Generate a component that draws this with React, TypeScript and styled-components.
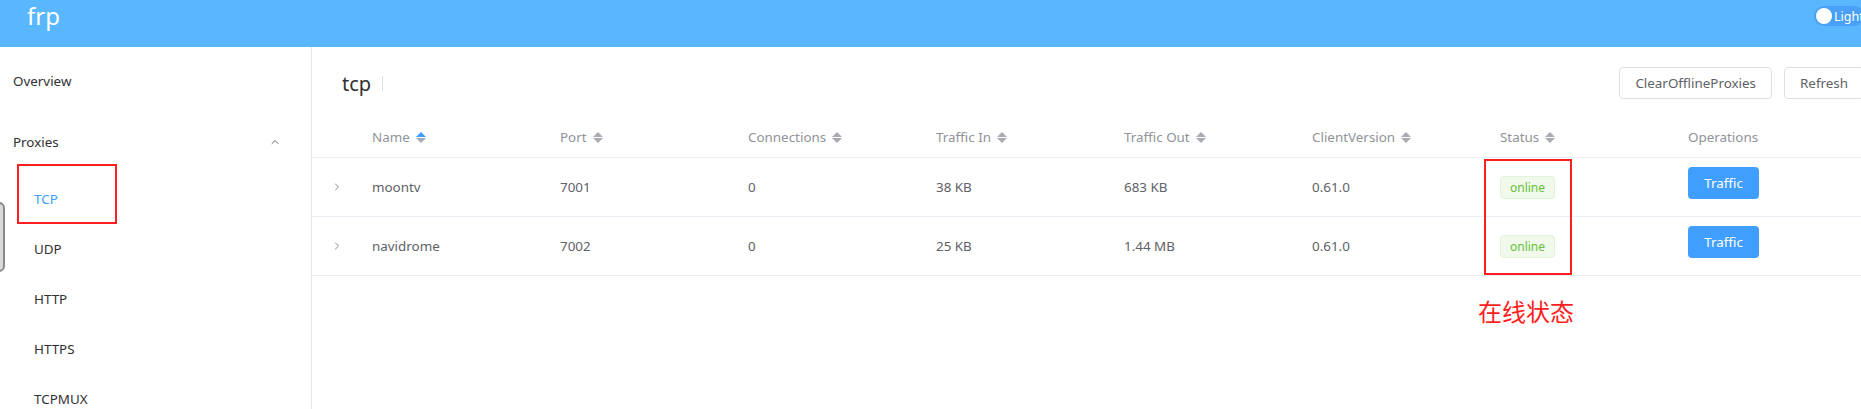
import React from "react";
import styled, { createGlobalStyle } from "styled-components";
import { ChevronRight, ChevronUp } from "lucide-react";

const GlobalStyle = createGlobalStyle`
  html, body {
    margin: 0;
    padding: 0;
    overflow: hidden;
    background: #fff;
  }
  body {
    font-family: "Noto Sans", "Noto Sans CJK SC", sans-serif;
    color: #303133;
  }
  * {
    box-sizing: border-box;
  }
`;

const Page = styled.div`
  width: 1884px;
  height: 409px;
  display: flex;
  flex-direction: column;
`;

const Header = styled.header`
  height: 47px;
  background: #58b7ff;
  display: flex;
  justify-content: space-between;
  align-items: flex-start;
  padding: 0 20px 0 27px;
`;

const Brand = styled.div`
  color: #fff;
  font-size: 24px;
  line-height: 32px;
`;

const ThemeSwitch = styled.div`
  margin-top: 6px;
  height: 20px;
  width: 50px;
  border-radius: 10px;
  background: #4a9ff7;
  display: flex;
  align-items: center;
  gap: 2px;
  padding-left: 2px;
  color: #fff;
  font-size: 12.5px;
`;

const Knob = styled.span`
  width: 16px;
  height: 16px;
  border-radius: 50%;
  background: #fff;
  flex: none;
`;

const Body = styled.div`
  flex: 1;
  display: flex;
  min-height: 0;
`;

const Sidebar = styled.aside`
  position: relative;
  width: 312px;
  flex: none;
  border-right: 1px solid #e6e6e6;
  padding-top: 3px;
`;

const MenuItem = styled.div`
  height: 61px;
  display: flex;
  align-items: center;
  justify-content: space-between;
  padding: 0 30px 0 13px;
  font-size: 13.4px;
  color: #303133;
`;

const SubMenu = styled.div`
  padding-top: 2px;
`;

const SubItem = styled.div<{ $active?: boolean }>`
  height: 50px;
  display: flex;
  align-items: center;
  padding-left: 34px;
  font-size: 13.4px;
  color: ${(p) => (p.$active ? "#409eff" : "#303133")};
`;

const MarkBox = styled.div`
  position: absolute;
  border: 2px solid #ff1f1f;
  pointer-events: none;
`;

const SideGrip = styled.div`
  position: absolute;
  left: -12px;
  top: 155px;
  width: 17px;
  height: 70px;
  border: 2px solid #8a8a8a;
  border-radius: 6px;
  background: #d9d9d9;
`;

const Main = styled.main`
  position: relative;
  flex: 1;
  min-width: 0;
`;

const Toolbar = styled.div`
  display: flex;
  align-items: center;
  justify-content: space-between;
  padding: 20px 20px 0 30px;
  height: 52px;
  margin-bottom: 18px;
`;

const Title = styled.div`
  display: flex;
  align-items: center;
  font-size: 20px;
  color: #303133;
  &::after {
    content: "";
    width: 1px;
    height: 15px;
    background: #dcdfe6;
    margin-left: 11px;
  }
`;

const Actions = styled.div`
  display: flex;
  gap: 12px;
`;

const PlainButton = styled.button`
  height: 32px;
  padding: 0 15px;
  border: 1px solid #dcdfe6;
  border-radius: 4px;
  background: #fff;
  color: #606266;
  font-family: inherit;
  font-size: 13.4px;
`;

const Table = styled.div`
  width: 1552px;
`;

const cols = "48px repeat(8, 188px)";

const HeadRow = styled.div`
  display: grid;
  grid-template-columns: ${cols};
  height: 41px;
  border-bottom: 1px solid #ebeef5;
  align-items: center;
`;

const HeadCell = styled.div`
  display: flex;
  align-items: center;
  gap: 6px;
  padding-left: 12px;
  font-size: 13.4px;
  color: #909399;
`;

const Row = styled.div`
  display: grid;
  grid-template-columns: ${cols};
  height: 59px;
  border-bottom: 1px solid #ebeef5;
  align-items: center;
`;

const Cell = styled.div`
  padding-left: 12px;
  font-size: 13.4px;
  color: #606266;
  display: flex;
  align-items: center;
`;

const ExpandCell = styled.div`
  display: flex;
  justify-content: center;
  padding-left: 2px;
  color: #606266;
`;

const Tag = styled.span`
  height: 23px;
  padding: 0 9px;
  display: inline-flex;
  align-items: center;
  border: 1px solid #e1f3d8;
  background: #f0f9eb;
  color: #67c23a;
  border-radius: 4px;
  font-size: 12px;
`;

const PrimaryButton = styled.button`
  height: 32px;
  width: 71px;
  margin-bottom: 9px;
  border: none;
  border-radius: 4px;
  background: #409eff;
  color: #fff;
  font-family: inherit;
  font-size: 13.4px;
`;

const Note = styled.div`
  position: absolute;
  left: 1166px;
  top: 252px;
  font-size: 24px;
  line-height: 24px;
  color: #ff1f1f;
  font-family: "Noto Sans CJK SC", sans-serif;
`;

const SortIcon = ({ up }: { up?: boolean }) => (
  <svg width="10" height="11" viewBox="0 0 10 11">
    <polygon points="0,5 5,0 10,5" fill={up ? "#409eff" : "#a8abb2"} />
    <polygon points="0,6 5,11 10,6" fill="#a8abb2" />
  </svg>
);

type Proxy = {
  name: string;
  port: string;
  conns: string;
  trafficIn: string;
  trafficOut: string;
  version: string;
};

const proxies: Proxy[] = [
  { name: "moontv", port: "7001", conns: "0", trafficIn: "38 KB", trafficOut: "683 KB", version: "0.61.0" },
  { name: "navidrome", port: "7002", conns: "0", trafficIn: "25 KB", trafficOut: "1.44 MB", version: "0.61.0" },
];

const columns = ["Name", "Port", "Connections", "Traffic In", "Traffic Out", "ClientVersion", "Status"];

const App = () => {
  return (
    <Page>
      <GlobalStyle />
      <Header>
        <Brand>frp</Brand>
        <ThemeSwitch>
          <Knob />
          Light
        </ThemeSwitch>
      </Header>
      <Body>
        <Sidebar>
          <MenuItem>Overview</MenuItem>
          <MenuItem>
            Proxies
            <ChevronUp size={12} strokeWidth={1.5} color="#303133" />
          </MenuItem>
          <SubMenu>
            <SubItem $active>TCP</SubItem>
            <SubItem>UDP</SubItem>
            <SubItem>HTTP</SubItem>
            <SubItem>HTTPS</SubItem>
            <SubItem>TCPMUX</SubItem>
          </SubMenu>
          <MarkBox style={{ left: 17, top: 117, width: 100, height: 60 }} />
          <SideGrip />
        </Sidebar>
        <Main>
          <Toolbar>
            <Title>tcp</Title>
            <Actions>
              <PlainButton>ClearOfflineProxies</PlainButton>
              <PlainButton>Refresh</PlainButton>
            </Actions>
          </Toolbar>
          <Table>
            <HeadRow>
              <div />
              {columns.map((c, i) => (
                <HeadCell key={c}>
                  {c}
                  <SortIcon up={i === 0} />
                </HeadCell>
              ))}
              <HeadCell>Operations</HeadCell>
            </HeadRow>
            {proxies.map((p) => (
              <Row key={p.name}>
                <ExpandCell>
                  <ChevronRight size={12} strokeWidth={1.5} />
                </ExpandCell>
                <Cell>{p.name}</Cell>
                <Cell>{p.port}</Cell>
                <Cell>{p.conns}</Cell>
                <Cell>{p.trafficIn}</Cell>
                <Cell>{p.trafficOut}</Cell>
                <Cell>{p.version}</Cell>
                <Cell>
                  <Tag>online</Tag>
                </Cell>
                <Cell>
                  <PrimaryButton>Traffic</PrimaryButton>
                </Cell>
              </Row>
            ))}
          </Table>
          <MarkBox style={{ left: 1172, top: 112, width: 88, height: 116 }} />
          <Note>在线状态</Note>
        </Main>
      </Body>
    </Page>
  );
};

export default App;
